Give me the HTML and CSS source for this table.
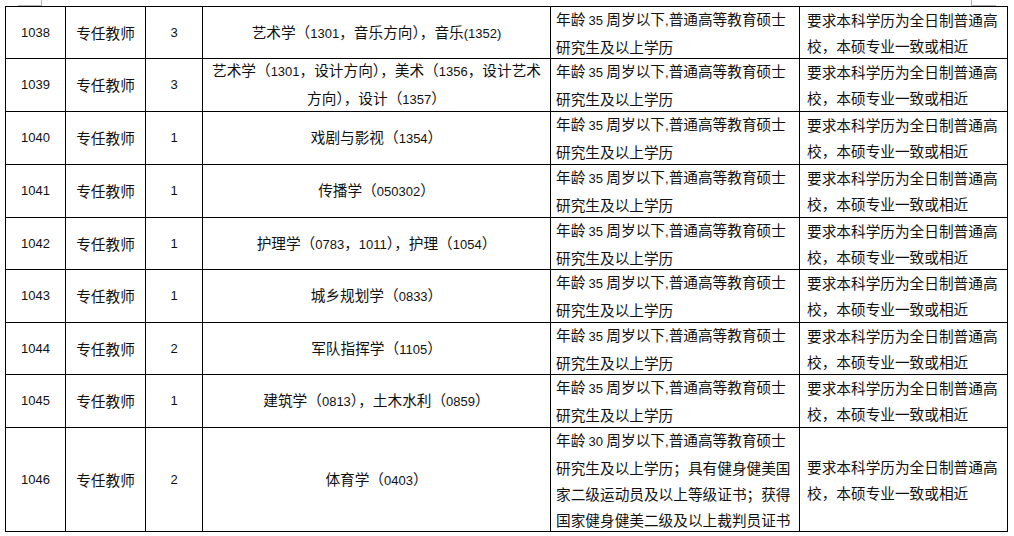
FILE: index.html
```html
<!DOCTYPE html>
<html lang="zh-CN">
<head>
<meta charset="utf-8">
<title>岗位表</title>
<link rel="stylesheet" href="styles.css">
</head>
<body>
<div class="page">
  <span class="mark mark-left"></span>
  <span class="mark mark-right"></span>
  <div class="table">
    <div class="c"><div class="t num">1038</div></div>
    <div class="c"><div class="t">专任教师</div></div>
    <div class="c"><div class="t num">3</div></div>
    <div class="c major"><div class="t">艺术学（<span class="num">1301</span>，音乐方向），音乐<span class="num">(1352)</span></div></div>
    <div class="c req"><div class="t">年龄 <span class="num">35</span> 周岁以下<span class="num">,</span>普通高等教育硕士<br>研究生及以上学历</div></div>
    <div class="c note"><div class="t">要求本科学历为全日制普通高<br>校，本硕专业一致或相近</div></div>

    <div class="c"><div class="t num">1039</div></div>
    <div class="c"><div class="t">专任教师</div></div>
    <div class="c"><div class="t num">3</div></div>
    <div class="c major"><div class="t">艺术学（<span class="num">1301</span>，设计方向），美术（<span class="num">1356</span>，设计艺术<br>方向），设计（<span class="num">1357</span>）</div></div>
    <div class="c req"><div class="t">年龄 <span class="num">35</span> 周岁以下<span class="num">,</span>普通高等教育硕士<br>研究生及以上学历</div></div>
    <div class="c note"><div class="t">要求本科学历为全日制普通高<br>校，本硕专业一致或相近</div></div>

    <div class="c"><div class="t num">1040</div></div>
    <div class="c"><div class="t">专任教师</div></div>
    <div class="c"><div class="t num">1</div></div>
    <div class="c major"><div class="t">戏剧与影视（<span class="num">1354</span>）</div></div>
    <div class="c req"><div class="t">年龄 <span class="num">35</span> 周岁以下<span class="num">,</span>普通高等教育硕士<br>研究生及以上学历</div></div>
    <div class="c note"><div class="t">要求本科学历为全日制普通高<br>校，本硕专业一致或相近</div></div>

    <div class="c"><div class="t num">1041</div></div>
    <div class="c"><div class="t">专任教师</div></div>
    <div class="c"><div class="t num">1</div></div>
    <div class="c major"><div class="t">传播学（<span class="num">050302</span>）</div></div>
    <div class="c req"><div class="t">年龄 <span class="num">35</span> 周岁以下<span class="num">,</span>普通高等教育硕士<br>研究生及以上学历</div></div>
    <div class="c note"><div class="t">要求本科学历为全日制普通高<br>校，本硕专业一致或相近</div></div>

    <div class="c"><div class="t num">1042</div></div>
    <div class="c"><div class="t">专任教师</div></div>
    <div class="c"><div class="t num">1</div></div>
    <div class="c major"><div class="t">护理学（<span class="num">0783</span>，<span class="num">1011</span>），护理（<span class="num">1054</span>）</div></div>
    <div class="c req"><div class="t">年龄 <span class="num">35</span> 周岁以下<span class="num">,</span>普通高等教育硕士<br>研究生及以上学历</div></div>
    <div class="c note"><div class="t">要求本科学历为全日制普通高<br>校，本硕专业一致或相近</div></div>

    <div class="c"><div class="t num">1043</div></div>
    <div class="c"><div class="t">专任教师</div></div>
    <div class="c"><div class="t num">1</div></div>
    <div class="c major"><div class="t">城乡规划学（<span class="num">0833</span>）</div></div>
    <div class="c req"><div class="t">年龄 <span class="num">35</span> 周岁以下<span class="num">,</span>普通高等教育硕士<br>研究生及以上学历</div></div>
    <div class="c note"><div class="t">要求本科学历为全日制普通高<br>校，本硕专业一致或相近</div></div>

    <div class="c"><div class="t num">1044</div></div>
    <div class="c"><div class="t">专任教师</div></div>
    <div class="c"><div class="t num">2</div></div>
    <div class="c major"><div class="t">军队指挥学（<span class="num">1105</span>）</div></div>
    <div class="c req"><div class="t">年龄 <span class="num">35</span> 周岁以下<span class="num">,</span>普通高等教育硕士<br>研究生及以上学历</div></div>
    <div class="c note"><div class="t">要求本科学历为全日制普通高<br>校，本硕专业一致或相近</div></div>

    <div class="c"><div class="t num">1045</div></div>
    <div class="c"><div class="t">专任教师</div></div>
    <div class="c"><div class="t num">1</div></div>
    <div class="c major"><div class="t">建筑学（<span class="num">0813</span>），土木水利（<span class="num">0859</span>）</div></div>
    <div class="c req"><div class="t">年龄 <span class="num">35</span> 周岁以下<span class="num">,</span>普通高等教育硕士<br>研究生及以上学历</div></div>
    <div class="c note"><div class="t">要求本科学历为全日制普通高<br>校，本硕专业一致或相近</div></div>

    <div class="c"><div class="t num">1046</div></div>
    <div class="c"><div class="t">专任教师</div></div>
    <div class="c"><div class="t num">2</div></div>
    <div class="c major"><div class="t">体育学（<span class="num">0403</span>）</div></div>
    <div class="c req"><div class="t">年龄 <span class="num">30</span> 周岁以下<span class="num">,</span>普通高等教育硕士<br>研究生及以上学历；具有健身健美国<br>家二级运动员及以上等级证书；获得<br>国家健身健美二级及以上裁判员证书</div></div>
    <div class="c note"><div class="t">要求本科学历为全日制普通高<br>校，本硕专业一致或相近</div></div>
  </div>
</div>
</body>
</html>
```

FILE: styles.css
```css
html, body {
  margin: 0;
  padding: 0;
  background: #ffffff;
}

.page {
  position: relative;
  padding: 6px 0 0 5px;
  font-family: "Noto Sans CJK SC", "Liberation Sans", sans-serif;
  font-size: 14.67px;
  color: #111;
}

.mark {
  position: absolute;
  top: 0;
  height: 5px;
  border-bottom: 1px solid #b5b5b5;
}

.mark-left {
  left: 18px;
  width: 23px;
  border-right: 1px solid #b5b5b5;
}

.mark-right {
  left: 971px;
  width: 24px;
  border-left: 1px solid #b5b5b5;
}

.table {
  display: grid;
  grid-template-columns: 60px 80px 57px 348px 249px 208px;
  grid-template-rows: 52px 53px 53px 53px 52px 53px 52px 53px 104px;
  width: max-content;
  border-left: 1px solid #000;
  border-top: 1px solid #000;
}

.c {
  box-sizing: border-box;
  border-right: 1px solid #000;
  border-bottom: 1px solid #000;
  display: flex;
  align-items: center;
  justify-content: center;
  text-align: center;
  line-height: 26px;
  white-space: nowrap;
}

.t {
  display: block;
}

.major {
  padding: 0 2px;
}

.req {
  justify-content: flex-start;
  text-align: left;
  padding-left: 5px;
}

.note {
  justify-content: flex-start;
  text-align: left;
  padding-left: 7px;
}

.num {
  font-family: "Liberation Sans", sans-serif;
  font-size: 13px;
}
```
